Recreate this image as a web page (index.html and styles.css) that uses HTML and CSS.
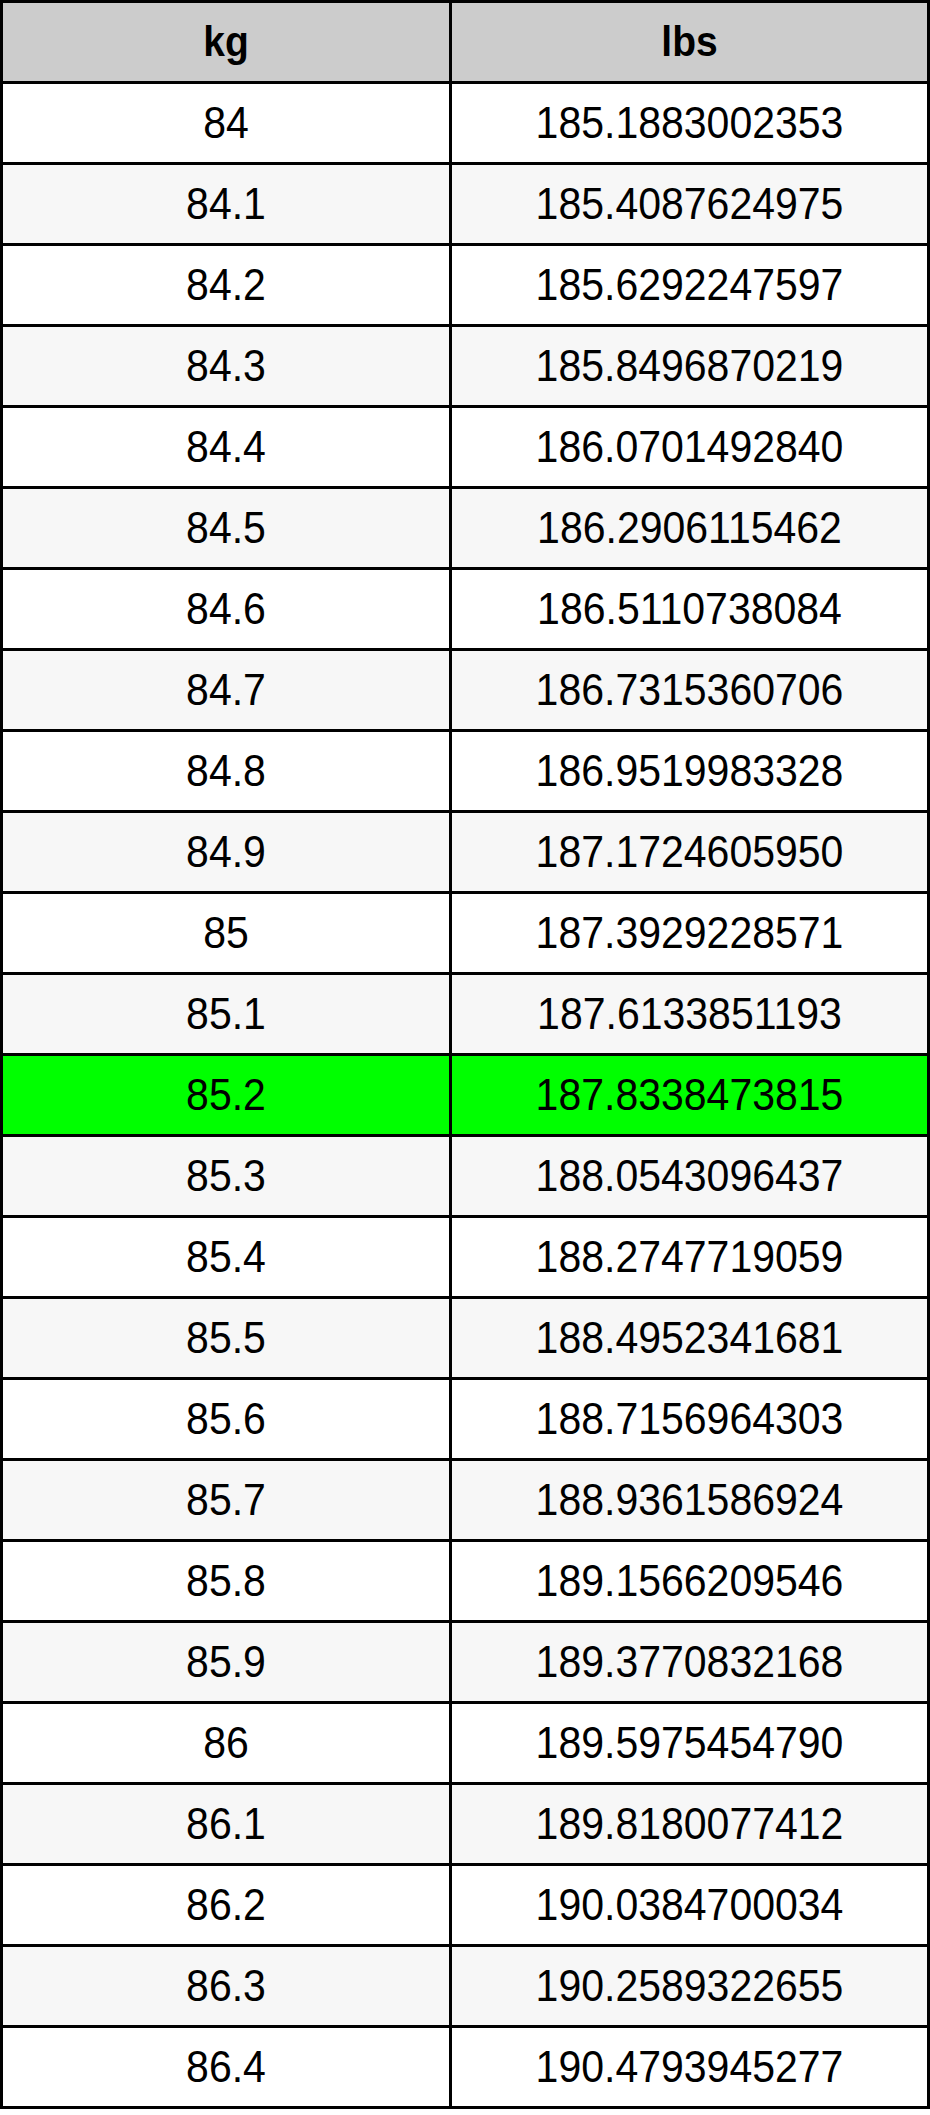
FILE: index.html
```html
<!DOCTYPE html>
<html>
<head>
<meta charset="utf-8">
<link rel="stylesheet" href="styles.css">
</head>
<body>
<table class="conv">
<thead>
<tr><th class="c1"><span>kg</span></th><th class="c2"><span>lbs</span></th></tr>
</thead>
<tbody>
<tr><td><span>84</span></td><td><span>185.1883002353</span></td></tr>
<tr><td><span>84.1</span></td><td><span>185.4087624975</span></td></tr>
<tr><td><span>84.2</span></td><td><span>185.6292247597</span></td></tr>
<tr><td><span>84.3</span></td><td><span>185.8496870219</span></td></tr>
<tr><td><span>84.4</span></td><td><span>186.0701492840</span></td></tr>
<tr><td><span>84.5</span></td><td><span>186.2906115462</span></td></tr>
<tr><td><span>84.6</span></td><td><span>186.5110738084</span></td></tr>
<tr><td><span>84.7</span></td><td><span>186.7315360706</span></td></tr>
<tr><td><span>84.8</span></td><td><span>186.9519983328</span></td></tr>
<tr><td><span>84.9</span></td><td><span>187.1724605950</span></td></tr>
<tr><td><span>85</span></td><td><span>187.3929228571</span></td></tr>
<tr><td><span>85.1</span></td><td><span>187.6133851193</span></td></tr>
<tr class="hl"><td><span>85.2</span></td><td><span>187.8338473815</span></td></tr>
<tr><td><span>85.3</span></td><td><span>188.0543096437</span></td></tr>
<tr><td><span>85.4</span></td><td><span>188.2747719059</span></td></tr>
<tr><td><span>85.5</span></td><td><span>188.4952341681</span></td></tr>
<tr><td><span>85.6</span></td><td><span>188.7156964303</span></td></tr>
<tr><td><span>85.7</span></td><td><span>188.9361586924</span></td></tr>
<tr><td><span>85.8</span></td><td><span>189.1566209546</span></td></tr>
<tr><td><span>85.9</span></td><td><span>189.3770832168</span></td></tr>
<tr><td><span>86</span></td><td><span>189.5975454790</span></td></tr>
<tr><td><span>86.1</span></td><td><span>189.8180077412</span></td></tr>
<tr><td><span>86.2</span></td><td><span>190.0384700034</span></td></tr>
<tr><td><span>86.3</span></td><td><span>190.2589322655</span></td></tr>
<tr><td><span>86.4</span></td><td><span>190.4793945277</span></td></tr>
</tbody>
</table>
</body>
</html>
```

FILE: styles.css
```css
html, body {
  margin: 0;
  padding: 0;
  background: #ffffff;
}

.conv {
  width: 930px;
  table-layout: fixed;
  border-collapse: separate;
  border-spacing: 0;
  border-top: 3px solid #000;
  border-left: 3px solid #000;
  font-family: "Liberation Sans", Arial, sans-serif;
  color: #000;
}

.conv th,
.conv td {
  box-sizing: border-box;
  padding: 0;
  text-align: center;
  vertical-align: middle;
  border-right: 3px solid #000;
  border-bottom: 3px solid #000;
  height: 81px;
  line-height: 40px;
}

.conv .c1 { width: 449px; }
.conv .c2 { width: 478px; }

.conv th {
  background: #cccccc;
  font-weight: bold;
  font-size: 39px;
}

.conv td {
  font-size: 41px;
  font-weight: normal;
}

.conv span {
  display: inline-block;
  transform: scaleY(1.1);
}

.conv tbody tr:nth-child(odd) td { background: #ffffff; }
.conv tbody tr:nth-child(even) td { background: #f7f7f7; }
.conv tbody tr.hl td { background: #00ff00; }
```
